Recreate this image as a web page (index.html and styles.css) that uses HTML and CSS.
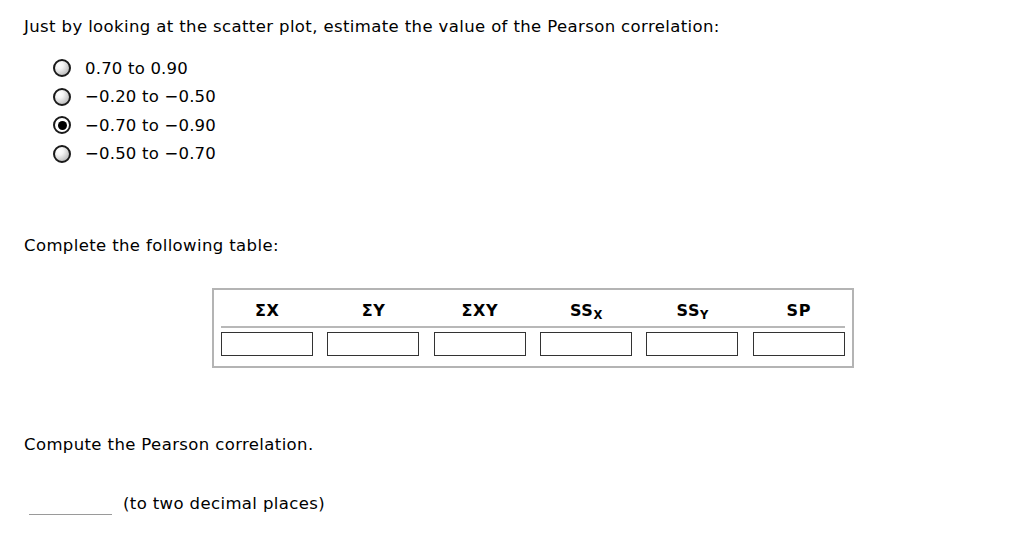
FILE: index.html
```html
<!DOCTYPE html>
<html>
<head>
<meta charset="utf-8">
<link rel="stylesheet" href="styles.css">
</head>
<body>
<div class="page">
  <p class="q">Just by looking at the scatter plot, estimate the value of the Pearson correlation:</p>
  <ul class="choices">
    <li><span class="radio"></span><span>0.70 to 0.90</span></li>
    <li><span class="radio"></span><span>&minus;0.20 to &minus;0.50</span></li>
    <li><span class="radio checked"></span><span>&minus;0.70 to &minus;0.90</span></li>
    <li><span class="radio"></span><span>&minus;0.50 to &minus;0.70</span></li>
  </ul>
  <p class="q q2">Complete the following table:</p>
  <div class="tbl">
    <div class="head">
      <div>&Sigma;X</div>
      <div>&Sigma;Y</div>
      <div>&Sigma;XY</div>
      <div>SS<sub>X</sub></div>
      <div>SS<sub>Y</sub></div>
      <div>SP</div>
    </div>
    <div class="rule"></div>
    <div class="inputs">
      <div class="cell"><span class="box"></span></div>
      <div class="cell"><span class="box"></span></div>
      <div class="cell"><span class="box"></span></div>
      <div class="cell"><span class="box"></span></div>
      <div class="cell"><span class="box"></span></div>
      <div class="cell"><span class="box"></span></div>
    </div>
  </div>
  <p class="q q3">Compute the Pearson correlation.</p>
  <div class="answer"><div class="blank"></div><span class="hint">(to two decimal places)</span></div>
</div>
</body>
</html>
```
FILE: styles.css
```css
html, body {
  margin: 0;
  padding: 0;
  background: #fff;
}
body {
  font-family: "DejaVu Sans", Verdana, sans-serif;
  font-size: 16.5px;
  letter-spacing: 0.38px;
  color: #000;
}
.page {
  padding: 17px 0 0 24px;
}
.q {
  margin: 0;
  line-height: 19px;
}
.choices {
  list-style: none;
  margin: 18px 0 0 29px;
  padding: 0;
}
.choices li {
  display: flex;
  align-items: center;
  height: 28.5px;
  gap: 14px;
  letter-spacing: 0.2px;
}
.radio {
  width: 14px;
  height: 14px;
  border: 2px solid #1a1a1a;
  border-radius: 50%;
  background: radial-gradient(circle at 30% 28%, #ffffff 0%, #f4f4f4 30%, #bdbdbd 78%, #8a8a8a 100%);
  position: relative;
  flex: none;
}
.radio.checked {
  background: #fff;
}
.radio.checked::after {
  content: "";
  position: absolute;
  left: 2.5px;
  top: 2.5px;
  width: 9px;
  height: 9px;
  border-radius: 50%;
  background: #000;
}
.q2 {
  margin-top: 68px;
}
.tbl {
  margin: 33px 0 0 188px;
  width: 638px;
  border: 2px solid #b4b4b4;
  padding: 0 0 10px 0;
}
.head {
  display: grid;
  grid-template-columns: repeat(6, 1fr);
  height: 36px;
  box-sizing: border-box;
  padding-top: 11px;
  font-weight: bold;
  font-size: 16px;
  letter-spacing: 0.6px;
  text-align: center;
}
.head > div {
  line-height: 19px;
}
.head sub {
  font-size: 11.5px;
  vertical-align: -3px;
  line-height: 0;
  letter-spacing: 0;
}
.rule {
  height: 2px;
  margin: 0 7px;
  background: #b8b8b8;
}
.inputs {
  display: grid;
  grid-template-columns: repeat(6, 1fr);
  margin-top: 4px;
}
.cell {
  display: flex;
  justify-content: center;
}
.box {
  display: block;
  width: 90px;
  height: 22px;
  border: 1px solid #333;
  background: #fff;
}
.q3 {
  margin-top: 67px;
}
.answer {
  display: flex;
  align-items: flex-start;
  margin: 40px 0 0 5px;
}
.blank {
  flex: none;
  width: 83px;
  height: 21px;
  box-sizing: border-box;
  border-bottom: 1px solid #9a9a9a;
  margin-right: 11px;
}
.hint {
  line-height: 19px;
}
```
